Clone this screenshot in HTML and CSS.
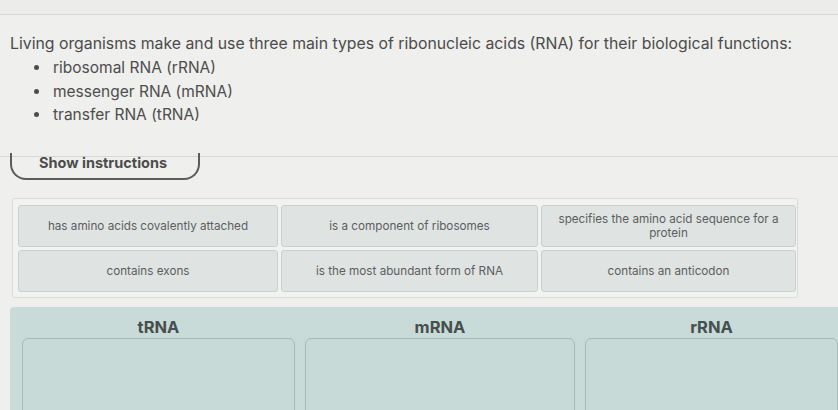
FILE: index.html
```html
<!DOCTYPE html>
<html>
<head>
<meta charset="utf-8">
<link rel="stylesheet" href="styles.css">
</head>
<body>
<div class="topbar"></div>
<div class="intro">
  <p class="lead">Living organisms make and use three main types of ribonucleic acids (RNA) for their biological functions:</p>
  <ul class="list">
    <li>ribosomal RNA (rRNA)</li>
    <li>messenger RNA (mRNA)</li>
    <li>transfer RNA (tRNA)</li>
  </ul>
</div>
<div class="instr-row">
  <button class="instr-btn">Show instructions</button>
</div>
<div class="bank">
  <div class="card">has amino acids covalently attached</div>
  <div class="card">is a component of ribosomes</div>
  <div class="card">specifies the amino acid sequence for a protein</div>
  <div class="card">contains exons</div>
  <div class="card">is the most abundant form of RNA</div>
  <div class="card">contains an anticodon</div>
</div>
<div class="targets">
  <div class="col">
    <div class="col-title">tRNA</div>
    <div class="drop"></div>
  </div>
  <div class="col">
    <div class="col-title">mRNA</div>
    <div class="drop"></div>
  </div>
  <div class="col">
    <div class="col-title">rRNA</div>
    <div class="drop"></div>
  </div>
</div>
</body>
</html>
```

FILE: styles.css
```css
* { box-sizing: border-box; }
html, body { height: 100%; }
body {
  margin: 0;
  background: #efefed;
  font-family: Inter, "Noto Sans", sans-serif;
  color: #4a4a4a;
  overflow: hidden;
}
.topbar {
  height: 15px;
  background: #ececea;
  border-bottom: 1px solid #d9d9d7;
}
.intro {
  padding: 18px 0 0 10px;
}
.lead {
  margin: 0;
  font-size: 15.8px;
  line-height: 22px;
  color: #4b4b4b;
}
.list {
  margin: 1px 0 0 0;
  padding-left: 41px;
  font-size: 15.5px;
  line-height: 23.5px;
  color: #4d4d4d;
}
.list li { padding-left: 2px; }
.instr-row {
  margin-top: 29px;
  border-top: 1px solid #d6d6d4;
  padding-left: 10px;
}
.instr-btn {
  display: block;
  width: 190px;
  height: 27px;
  margin-top: -4px;
  border: 2px solid #5c5c5c;
  border-top: none;
  border-radius: 0 0 16px 16px;
  background: transparent;
  font-family: Inter, "Noto Sans", sans-serif;
  font-weight: 700;
  font-size: 14.5px;
  color: #4c4c4c;
  text-align: left;
  padding: 0 0 6px 27px;
}
.bank {
  margin: 18px 40px 0 12px;
  padding: 6px 4px 5px 5px;
  border: 1px solid #dadad8;
  border-radius: 3px;
  background: #f2f2f0;
  display: grid;
  grid-template-columns: 260px 257px 255px;
  grid-auto-rows: 42px;
  gap: 3px 3px;
}
.card {
  display: flex;
  align-items: center;
  justify-content: center;
  text-align: center;
  padding: 0 12px;
  font-size: 11.7px;
  line-height: 14px;
  color: #5d5d5d;
  background: #dfe4e3;
  border: 1px solid #c9d0cf;
  border-radius: 3px;
}
.targets {
  margin: 9px 0 0 10px;
  height: 110px;
  background: #c9dbd8;
  border-radius: 4px 0 0 0;
  display: grid;
  grid-template-columns: 273px 270px 1fr;
  gap: 10px;
  padding: 10px 0 0 12px;
}
.col-title {
  text-align: center;
  font-weight: 700;
  font-size: 16.5px;
  line-height: 20px;
  color: #474f4e;
  height: 21px;
}
.drop {
  height: 80px;
  border: 1px solid #a8b8b6;
  border-radius: 6px;
  background: #c7dad7;
}
```
